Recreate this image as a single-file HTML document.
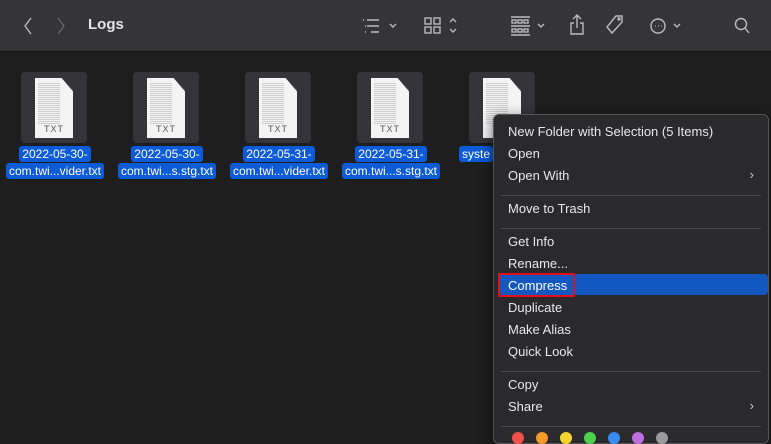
<!DOCTYPE html>
<html><head><style>
*{margin:0;padding:0;box-sizing:border-box}
body{width:771px;height:436px;overflow:hidden;background:#1e1e1e;font-family:"Liberation Sans",sans-serif;position:relative;color:#fff}
.tb{position:absolute;left:0;top:0;width:771px;height:52px;background:#353437;border-bottom:1px solid #111}
.tb svg{position:absolute}
.title{position:absolute;left:88px;top:16px;font-size:15px;font-weight:bold;color:#e6e6e6}
.tile{position:absolute;top:72px;width:66px;height:71px;background:#353437;border-radius:4px}
.doc{position:absolute;left:14px;top:6px;width:38px;height:60px;background:#f4f4f4;clip-path:polygon(0 0,70% 0,100% 22%,100% 100%,0 100%)}
.doc:before{content:"";position:absolute;left:3px;top:4px;width:22px;height:42px;background:repeating-linear-gradient(#f4f4f4 0 1px,#c4c4c4 1px 2px);opacity:.8}
.doc span{position:absolute;bottom:4px;width:100%;text-align:center;font-size:9px;color:#555;letter-spacing:1px}
.lab{position:absolute;font-size:12px;color:#fff;text-align:center;width:110px}
.lab span{background:#0d5bd6;padding:1px 3px;border-radius:3px;line-height:17px}
.menu{position:absolute;left:493px;top:114px;width:276px;height:330px;background:#2a2a2c;border:1px solid #555;border-radius:6px;box-shadow:0 4px 14px rgba(0,0,0,.6)}
.it{position:absolute;left:14px;font-size:13px;color:#e8e8e8}
.sep{position:absolute;left:7px;right:7px;height:1px;background:#4a4a4c}
.arr{position:absolute;right:14px;font-size:13px;color:#ccc}
.dot{position:absolute;top:317px;width:12px;height:12px;border-radius:50%}
</style></head><body>
<div class="tb">
<svg width="771" height="52" fill="none" stroke="#bbb" stroke-width="1.4">
<path d="M31 18l-6 8 6 8"/>
<path d="M58 18l6 8-6 8" stroke="#666"/>
<path d="M367 20h12M367 26h12M371 32h8M363 20h1M365 26h1M365 32h1"/><path d="M390 24l3 3 3-3"/>
<rect x="425" y="18" width="6" height="6"/><rect x="434" y="18" width="6" height="6"/><rect x="425" y="27" width="6" height="6"/><rect x="434" y="27" width="6" height="6"/>
<path d="M450 22l3-3 3 3M450 29l3 3 3-3"/>
<path d="M511 17h19M511 26h19M511 35h19"/><rect x="512" y="20" width="4" height="3"/><rect x="518" y="20" width="4" height="3"/><rect x="524" y="20" width="4" height="3"/><rect x="512" y="29" width="4" height="3"/><rect x="518" y="29" width="4" height="3"/><rect x="524" y="29" width="4" height="3"/>
<path d="M538 24l3 3 3-3"/>
<path d="M574 23h-3v11h12v-11h-3M577 28v-13M573 19l4-4 4 4"/>
<path d="M607 27l9-11h6v6l-10 11z"/><circle cx="619" cy="19" r="1"/>
<circle cx="658" cy="26" r="7"/><path d="M655 26h.5M658 26h.5M661 26h.5" stroke-width="2"/>
<path d="M674 24l3 3 3-3"/>
<circle cx="741" cy="24" r="5.5"/><path d="M745 28l4 5"/>
</svg>
<div class="title">Logs</div>
</div>
<div class="tile" style="left:21px"><div class="doc"><span>TXT</span></div></div>
<div class="tile" style="left:133px"><div class="doc"><span>TXT</span></div></div>
<div class="tile" style="left:245px"><div class="doc"><span>TXT</span></div></div>
<div class="tile" style="left:357px"><div class="doc"><span>TXT</span></div></div>
<div class="tile" style="left:469px"><div class="doc"><span>TXT</span></div></div>
<div class="lab" style="left:0;top:146px"><span>2022-05-30-</span><br><span>com.twi...vider.txt</span></div>
<div class="lab" style="left:112px;top:146px"><span>2022-05-30-</span><br><span>com.twi...s.stg.txt</span></div>
<div class="lab" style="left:224px;top:146px"><span>2022-05-31-</span><br><span>com.twi...vider.txt</span></div>
<div class="lab" style="left:336px;top:146px"><span>2022-05-31-</span><br><span>com.twi...s.stg.txt</span></div>
<div class="lab" style="left:459px;top:146px;width:40px;text-align:left"><span>syste</span></div>
<div class="menu">
<div class="it" style="top:9px">New Folder with Selection (5 Items)</div>
<div class="it" style="top:31px">Open</div>
<div class="it" style="top:53px">Open With</div><div class="arr" style="top:52px">›</div>
<div class="sep" style="top:80px"></div>
<div class="it" style="top:86px">Move to Trash</div>
<div class="sep" style="top:113px"></div>
<div class="it" style="top:119px">Get Info</div>
<div class="it" style="top:141px">Rename...</div>
<div style="position:absolute;left:5px;top:159px;width:269px;height:21px;background:#1358c0;border-radius:4px"></div>
<div style="position:absolute;left:4px;top:158px;width:77px;height:24px;border:2px solid #e0101a"></div>
<div class="it" style="top:163px;color:#fff">Compress</div>
<div class="it" style="top:185px">Duplicate</div>
<div class="it" style="top:207px">Make Alias</div>
<div class="it" style="top:229px">Quick Look</div>
<div class="sep" style="top:256px"></div>
<div class="it" style="top:262px">Copy</div>
<div class="it" style="top:284px">Share</div><div class="arr" style="top:283px">›</div>
<div class="sep" style="top:311px"></div>
<div class="dot" style="left:18px;background:#f0504a"></div>
<div class="dot" style="left:42px;background:#f49a2a"></div>
<div class="dot" style="left:66px;background:#f5d430"></div>
<div class="dot" style="left:90px;background:#4cd04e"></div>
<div class="dot" style="left:114px;background:#3a8cf0"></div>
<div class="dot" style="left:138px;background:#be6ee0"></div>
<div class="dot" style="left:162px;background:#9a9a9c"></div>
</div>
</body></html>
